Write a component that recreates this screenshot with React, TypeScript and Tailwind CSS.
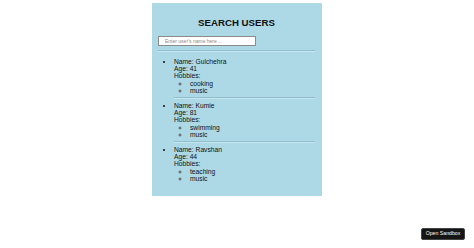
import React from 'react';

type User = {
  name: string;
  age: number;
  hobbies: string[];
};

const users: User[] = [
  { name: 'Gulchehra', age: 41, hobbies: ['cooking', 'music'] },
  { name: 'Kumie', age: 81, hobbies: ['swimming', 'music'] },
  { name: 'Ravshan', age: 44, hobbies: ['teaching', 'music'] },
];

export default function App() {
  return (
    <div className="relative w-[474px] h-[248px] bg-white font-['Liberation_Sans',Arial,sans-serif] text-black overflow-hidden">
      {/* Search panel */}
      <div className="absolute left-[152px] top-[3px] w-[170px] h-[193px] bg-[#add8e6] pt-[5px] px-[6px] pr-[7px]">
        <h2 className="text-center font-bold text-[9.7px] leading-[11px] mt-[8.5px] mb-[8.5px] text-[#111]">SEARCH USERS</h2>
        <input
          type="text"
          placeholder="Enter user's name here ..."
          className="block w-[98px] h-[10px] bg-white border-[0.5px] border-[#8a8a8a] px-[6px] text-[5px] placeholder:text-[#888] outline-none"
        />
        <div className="mt-[4px] border-t border-[#93bfcd] border-b-[0.5px] border-b-[#c4e6f0]"></div>
        <ul className="list-disc pl-[16px] mt-[5.5px] text-[6.7px] leading-[7.4px] text-[#111]">
          {users.map((u, i) => (
            <li key={u.name}>
              <div>Name: {u.name}</div>
              <div>Age: {u.age}</div>
              <div>Hobbies:</div>
              <ul className="list-[circle] pl-[16px] marker:text-[#555]">
                {u.hobbies.map((h) => (
                  <li key={h}>{h}</li>
                ))}
              </ul>
              {i < users.length - 1 && (
                <div className="mt-[2.5px] mb-[2.5px] border-t border-[#93bfcd] border-b-[0.5px] border-b-[#c4e6f0]"></div>
              )}
            </li>
          ))}
        </ul>
      </div>

      {/* Sandbox button */}
      <button className="absolute left-[421px] top-[228px] w-[44px] h-[12px] rounded-[2px] bg-[#151515] border-[0.5px] border-[#444] text-white text-[5.2px] leading-none flex items-center justify-center">
        Open Sandbox
      </button>
    </div>
  );
}
